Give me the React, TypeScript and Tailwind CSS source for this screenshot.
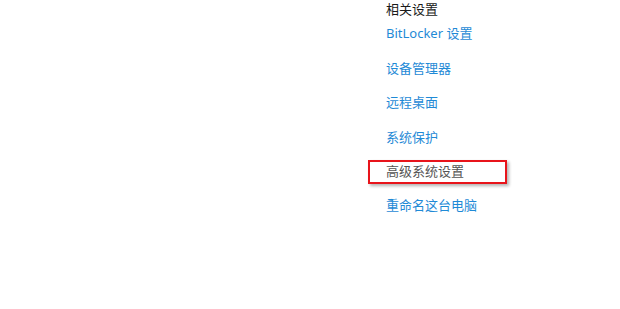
import React from "react";

const font = { fontFamily: '"Noto Sans", "Noto Sans CJK SC", sans-serif' };

export default function App() {
  const links = ["BitLocker 设置", "设备管理器", "远程桌面", "系统保护", "高级系统设置", "重命名这台电脑"];
  return (
    <div className="w-[620px] h-[309px] bg-white overflow-hidden" style={font}>
      <div className="flex flex-col pl-[386px] pt-[1px]">
        <div className="h-[18px] flex items-center text-[13px] text-[#1a1a1a]">相关设置</div>
        <div className="flex flex-col mt-[-2px]">
          {links.map((l, i) => (
            <div key={l} className="relative h-[34.4px] flex items-center text-[13px]">
              {i === 4 ? (
                <>
                  <span className="text-[#555555]">{l}</span>
                  <div className="absolute left-[-18px] top-[5px] w-[139px] h-[24px] border-2 border-[#e8141b] shadow-[2px_2px_3px_rgba(0,0,0,0.3)]" />
                </>
              ) : (
                <span className="text-[#1f8ad6]">{l}</span>
              )}
            </div>
          ))}
        </div>
      </div>
    </div>
  );
}
